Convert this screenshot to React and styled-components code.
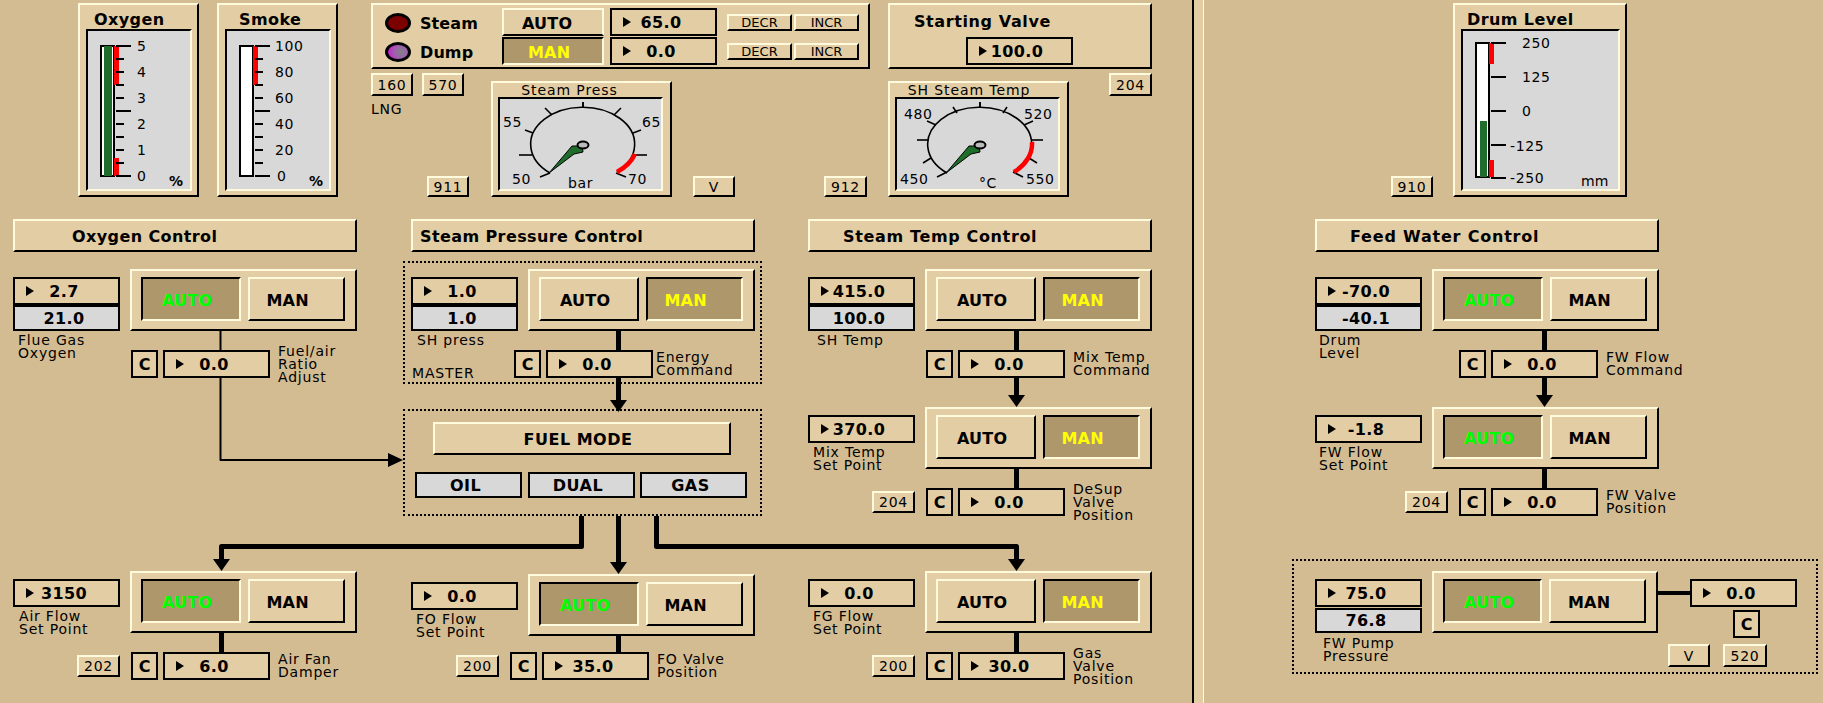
import React from "react";
import styled, { createGlobalStyle, css } from "styled-components";

const BG = "#d3bc92";
const PANEL = "#e3cda4";
const PRESSED = "#ae986b";
const CREAM = "#fffbdc";
const GREY = "#d8d8d8";
const GREEN = "#1f6d2b";

const raised = css`
    border-style: solid;
    border-width: 2px;
    border-color: ${CREAM} #000 #000 ${CREAM};
`;

const sunken = css`
    border-style: solid;
    border-width: 2px;
    border-color: #000 ${CREAM} ${CREAM} #000;
`;

const GlobalStyle = createGlobalStyle`
    * { box-sizing: border-box; }
    body {
        margin: 0;
        background: ${BG};
        font-family: "DejaVu Sans", Verdana, sans-serif;
        color: #000;
    }
`;

const Page = styled.div`
    position: relative;
    display: flex;
    width: 1823px;
    height: 703px;
    overflow: hidden;
    background: ${BG};
`;

const LeftPanel = styled.div`
    width: 1192px;
    flex: none;
`;

const Divider = styled.div`
    width: 12px;
    flex: none;
    background: ${PANEL};
    border-left: 2px solid #000;
    border-right: 1px solid ${CREAM};
`;

const RightPanel = styled.div`
    flex: 1;
`;

const TopRow = styled.div`
    display: flex;
    height: 194px;
    margin-top: 3px;
    padding-left: ${p => p.$left}px;
`;

const ControlsRow = styled.div`
    display: flex;
    margin-top: 22px;
    padding-left: ${p => p.$left}px;
`;

/* meters */
const MeterPanel = styled.div`
    ${raised}
    width: ${p => p.$width}px;
    flex: none;
    margin-left: ${p => p.$ml || 0}px;
    background: ${PANEL};
    display: flex;
    flex-direction: column;
`;

const MeterTitle = styled.div`
    height: 24px;
    padding-left: ${p => p.$indent}px;
    font-size: 16px;
    font-weight: 700;
    letter-spacing: 0.4px;
    line-height: 29px;
`;

const MeterScreen = styled.div`
    ${sunken}
    height: 162px;
    margin: 0 5px 0 6px;
    background: ${GREY};
`;

const Svg = styled.svg`
    display: block;
    overflow: visible;
`;

const ScaleText = styled.text`
    font-family: "DejaVu Sans", Verdana, sans-serif;
    font-size: 14px;
    letter-spacing: 0.6px;
`;

const UnitText = styled.text`
    font-family: "DejaVu Sans", Verdana, sans-serif;
    font-size: 14px;
    font-weight: ${p => p.$weight || 400};
`;

function BarMeter({ title, indent, width, ml, barY, barH, fill, reds, ticks, labels, unit, unitX }) {
    return (
        <MeterPanel $width={width} $ml={ml}>
            <MeterTitle $indent={indent}>{title}</MeterTitle>
            <MeterScreen>
                <Svg width={width - 20} height={158}>
                    <rect x="13" y={barY + 1} width="13" height={barH - 2} fill="#fff" stroke="#000" strokeWidth="2" />
                    {fill && <rect x={fill.x} y={fill.y} width={fill.w} height={fill.h} fill={GREEN} />}
                    {reds.map(r => <rect key={r[0]} x="26" y={r[0]} width="5" height={r[1]} fill="#f00" />)}
                    {ticks.map(t => <rect key={t[0]} x="28" y={t[0] - 1} width={t[1] ? 15 : 8} height="2" fill="#000" />)}
                    {labels.map(l => <ScaleText key={l[0]} x={l[1]} y={l[2]}>{l[0]}</ScaleText>)}
                    <UnitText x={unitX} y="155" $weight={unit === "%" ? 700 : 400}>{unit}</UnitText>
                </Svg>
            </MeterScreen>
        </MeterPanel>
    );
}

const percentTicks = [15, 28, 41, 54, 67, 80, 93, 106, 119, 132, 145].map(y => [y, y === 15 || y === 80 || y === 145]);

/* round gauges */
const GaugePanel = styled.div`
    ${raised}
    width: 181px;
    height: 116px;
    flex: none;
    align-self: flex-end;
    margin-left: ${p => p.$ml || 0}px;
    background: ${PANEL};
`;

const GaugeTitle = styled.div`
    height: 14px;
    font-size: 14px;
    line-height: 14px;
    letter-spacing: 0.9px;
    text-align: center;
    padding-right: ${p => p.$shift}px;
`;

const GaugeScreen = styled.div`
    ${sunken}
    height: 94px;
    width: 165px;
    margin-left: 5px;
    background: ${GREY};
`;

function Gauge({ title, shift, ml, ticks, labels, unit, unitX, redFrom }) {
    return (
        <GaugePanel $ml={ml}>
            <GaugeTitle $shift={shift}>{title}</GaugeTitle>
            <GaugeScreen>
                <Svg width="161" height="90">
                    <path d="M50 74 A52 37 0 1 1 117 73" fill="none" stroke="#000" strokeWidth="1.6" />
                    {ticks.map(t => (
                        <g key={t.join()} stroke="#000" strokeWidth="1.6">
                            <line x1={t[0]} y1={t[1]} x2={t[2]} y2={t[3]} />
                            <line x1={166 - t[0]} y1={t[1]} x2={166 - t[2]} y2={t[3]} />
                        </g>
                    ))}
                    <path d={`M135 ${redFrom} A52 37 0 0 1 117 73`} fill="none" stroke="#f00" strokeWidth="4.5" />
                    <polygon points="49,74 72,47 82,47 83,53 74,55" fill={GREEN} stroke="#000" strokeWidth="1" />
                    <ellipse cx="83" cy="46" rx="5.5" ry="3.5" fill="#bbb" stroke="#000" strokeWidth="2" />
                    {labels.map(l => <ScaleText key={l[0]} x={l[1]} y={l[2]}>{l[0]}</ScaleText>)}
                    <ScaleText x={unitX} y="89">{unit}</ScaleText>
                </Svg>
            </GaugeScreen>
        </GaugePanel>
    );
}

/* fields and buttons */
const Field = styled.div`
    position: relative;
    width: 107px;
    height: ${p => p.$h || 28}px;
    flex: none;
    display: flex;
    align-items: center;
    justify-content: center;
    padding-right: 5px;
    border: 2px solid #000;
    background: ${p => (p.$grey ? GREY : PANEL)};
    font-size: 16px;
    font-weight: 700;
    letter-spacing: 0.4px;
`;

const Pointer = styled.span`
    position: absolute;
    left: 11px;
    top: 50%;
    margin-top: -5px;
    border-style: solid;
    border-width: 5px 0 5px 8px;
    border-color: transparent transparent transparent #000;
`;

function Value({ value, grey, h }) {
    return (
        <Field $grey={grey} $h={h}>
            {!grey && <Pointer />}
            {value}
        </Field>
    );
}

const Tag = styled.div`
    ${raised}
    width: ${p => p.$w || 43}px;
    height: ${p => p.$h || 22}px;
    flex: none;
    display: flex;
    align-items: center;
    justify-content: center;
    background: ${PANEL};
    font-size: 14px;
    letter-spacing: 0.8px;
    margin-left: ${p => p.$ml || 0}px;
    margin-right: ${p => p.$mr || 0}px;
    align-self: ${p => p.$self || "auto"};
`;

const FootTag = styled(Tag)`
    margin-top: auto;
`;

const ClearBox = styled.div`
    width: 27px;
    height: 28px;
    flex: none;
    display: flex;
    align-items: center;
    justify-content: center;
    border: 2px solid #000;
    background: ${PANEL};
    font-size: 16px;
    font-weight: 700;
`;

const ModeButton = styled.div`
    ${p => (p.$on ? sunken : raised)}
    flex: 1;
    display: flex;
    align-items: center;
    padding: 2px 0 0 ${p => p.$pad}px;
    background: ${p => (p.$on ? PRESSED : PANEL)};
    color: ${p => (p.$on ? p.$lit : "#000")};
    font-size: 16px;
    font-weight: 700;
    letter-spacing: 0.2px;
`;

const Switch = styled.div`
    ${raised}
    width: ${p => p.$w || 227}px;
    height: 62px;
    flex: none;
    display: flex;
    gap: 7px;
    padding: 6px 10px 8px 9px;
    background: ${PANEL};
    margin-top: ${p => p.$mt || 0}px;
`;

function ModeSwitch({ mode, w, mt }) {
    return (
        <Switch $w={w} $mt={mt}>
            <ModeButton $on={mode === "auto"} $lit="#0f0" $pad={19}>AUTO</ModeButton>
            <ModeButton $on={mode === "man"} $lit="#ff0" $pad={17}>MAN</ModeButton>
        </Switch>
    );
}

/* steam / dump panel */
const SteamGroup = styled.div`
    width: 499px;
    flex: none;
    margin-left: 33px;
    display: flex;
    flex-direction: column;
`;

const SteamPanel = styled.div`
    ${raised}
    height: 66px;
    flex: none;
    display: flex;
    flex-direction: column;
    gap: 1px;
    padding: 3px 0 0 12px;
    background: ${PANEL};
`;

const SteamRow = styled.div`
    display: flex;
    align-items: center;
    height: 28px;
`;

const Lamp = styled.div`
    width: 26px;
    height: 20px;
    flex: none;
    margin-top: 2px;
    border-radius: 50%;
    border: 3px solid #000;
    background: ${p => p.$fill};
`;

const LampName = styled.div`
    width: 91px;
    flex: none;
    padding: 3px 0 0 9px;
    font-size: 16px;
    font-weight: 700;
    letter-spacing: 0.1px;
`;

const SteamMode = styled.div`
    ${p => (p.$on ? sunken : raised)}
    width: 102px;
    height: 28px;
    flex: none;
    margin-right: 6px;
    display: flex;
    align-items: center;
    padding: 2px 0 0 ${p => (p.$on ? 24 : 18)}px;
    background: ${p => (p.$on ? PRESSED : PANEL)};
    color: ${p => (p.$on ? "#ff0" : "#000")};
    font-size: 16px;
    font-weight: 700;
    letter-spacing: 0.2px;
    border-right-color: ${CREAM};
`;

const StepButton = styled.div`
    ${raised}
    width: 65px;
    height: 17px;
    flex: none;
    margin-left: ${p => p.$ml}px;
    display: flex;
    align-items: center;
    justify-content: center;
    font-size: 13px;
    background: ${PANEL};
`;

function SteamLine({ lamp, name, modeOn, mode, value }) {
    return (
        <SteamRow>
            <Lamp $fill={lamp} />
            <LampName>{name}</LampName>
            <SteamMode $on={modeOn}>{mode}</SteamMode>
            <Value value={value} />
            <StepButton $ml={10}>DECR</StepButton>
            <StepButton $ml={2}>INCR</StepButton>
        </SteamRow>
    );
}

const UnderRow = styled.div`
    flex: 1;
    display: flex;
    margin-top: 4px;
`;

const TagStack = styled.div`
    width: 98px;
    flex: none;
    display: flex;
    flex-direction: column;
`;

const TagRow = styled.div`
    display: flex;
    gap: 9px;
`;

const SmallCaption = styled.div`
    font-size: 14px;
    letter-spacing: 0.8px;
    line-height: 14px;
    margin-top: 6px;
`;

/* starting valve */
const StartGroup = styled.div`
    width: 264px;
    flex: none;
    margin-left: 18px;
    display: flex;
    flex-direction: column;
`;

const StartPanel = styled.div`
    ${raised}
    height: 66px;
    flex: none;
    padding: 5px 0 0 24px;
    background: ${PANEL};
`;

const StartTitle = styled.div`
    font-size: 16px;
    font-weight: 700;
    letter-spacing: 0.6px;
    line-height: 23px;
    margin-bottom: 4px;
`;

const StartField = styled.div`
    margin-left: 52px;
`;

/* control columns */
const Column = styled.div`
    display: grid;
    width: 344px;
    flex: none;
    margin-left: ${p => p.$ml || 0}px;
    grid-template-rows: 33px 17px 109px 29px 109px 55px 109px;
`;

const TitleBar = styled.div`
    ${raised}
    grid-row: 1;
    background: ${PANEL};
    padding-left: ${p => p.$indent}px;
    font-size: 16px;
    font-weight: 700;
    letter-spacing: ${p => p.$ls || 0.4}px;
    line-height: 32px;
`;

const Slot = styled.div`
    grid-row: ${p => p.$row};
    padding-top: ${p => p.$drop || 0}px;
    min-width: 0;
`;

const UnitTop = styled.div`
    display: flex;
    gap: 10px;
    height: 62px;
`;

const LeftCell = styled.div`
    width: 107px;
    flex: none;
    padding-top: 8px;
`;

const Caption = styled.div`
    font-size: 14px;
    letter-spacing: 0.8px;
    line-height: 13px;
    margin: 3px 0 0 ${p => p.$indent || 5}px;
    white-space: pre;
`;

const OutRow = styled.div`
    display: flex;
    align-items: center;
    height: 28px;
    margin-top: ${p => 19 - (p.$drop || 0)}px;
    padding-left: ${p => p.$at}px;
`;

const OutField = styled.div`
    margin-left: 5px;
`;

const OutCaption = styled.div`
    flex: none;
    margin-left: ${p => p.$gap || 8}px;
    font-size: 14px;
    letter-spacing: 0.8px;
    line-height: 13px;
    white-space: pre;
`;

function ControlUnit({ setValue, pv, caption, indent, mode, at = 118, out, outCaption, outGap, tag, drop }) {
    return (
        <>
            <UnitTop>
                <LeftCell>
                    <Value value={setValue} />
                    {pv && <Value value={pv} grey h={26} />}
                    <Caption $indent={indent}>{caption}</Caption>
                </LeftCell>
                <ModeSwitch mode={mode} />
            </UnitTop>
            <OutRow $at={tag ? at - 54 : at} $drop={drop}>
                {tag && <Tag $mr={11}>{tag}</Tag>}
                <ClearBox>C</ClearBox>
                <OutField><Value value={out} /></OutField>
                <OutCaption $gap={outGap}>{outCaption}</OutCaption>
            </OutRow>
        </>
    );
}

/* dotted groups */
const MasterBox = styled.div`
    position: relative;
    margin: -8px -7px 0 -8px;
    height: 123px;
    padding: 6px 5px 0 6px;
    border: 2px dotted #000;
`;

const MasterLabel = styled.div`
    position: absolute;
    left: 7px;
    bottom: 2px;
    font-size: 14px;
    letter-spacing: 0.8px;
    line-height: 14px;
`;

const FuelBox = styled.div`
    margin: 2px -7px 0 -8px;
    height: 107px;
    padding: 11px 13px 0 10px;
    border: 2px dotted #000;
`;

const FuelButton = styled.div`
    ${raised}
    height: 33px;
    margin: 0 16px 0 18px;
    padding: 2px 8px 0 0;
    display: flex;
    align-items: center;
    justify-content: center;
    background: ${PANEL};
    font-size: 16px;
    font-weight: 700;
    letter-spacing: 0.5px;
`;

const FuelRow = styled.div`
    display: flex;
    justify-content: space-between;
    margin-top: 17px;
`;

const FuelChoice = styled.div`
    width: 107px;
    height: 26px;
    padding: 1px 6px 0 0;
    display: flex;
    align-items: center;
    justify-content: center;
    border: 2px solid #000;
    background: ${GREY};
    font-size: 16px;
    font-weight: 700;
    letter-spacing: 0.5px;
`;

const PumpBox = styled.div`
    display: flex;
    width: 526px;
    height: 115px;
    margin: -12px 0 0 -23px;
    padding-left: 21px;
    border: 2px dotted #000;
`;

const PumpLeft = styled.div`
    width: 107px;
    flex: none;
    margin-right: 10px;
    padding-top: 18px;
    display: flex;
    flex-direction: column;
    gap: 1px;
`;

const PumpRight = styled.div`
    width: 107px;
    flex: none;
    margin-left: 32px;
    padding-top: 18px;
    display: flex;
    flex-direction: column;
`;

const PumpClear = styled.div`
    margin: 3px 0 0 43px;
`;

const PumpTags = styled.div`
    display: flex;
    gap: 13px;
    margin: 6px 0 0 -22px;
`;

/* wires drawn over the panels */
const WireLayer = styled.svg`
    position: absolute;
    left: 0;
    top: 0;
    pointer-events: none;
`;

function Wire({ d, w = 5 }) {
    return <path d={d} fill="none" stroke="#000" strokeWidth={w} strokeLinejoin="round" />;
}

function ArrowDown({ x, y }) {
    return <polygon points={`${x - 8.5},${y - 12} ${x + 8.5},${y - 12} ${x},${y}`} fill="#000" />;
}

function Wires() {
    return (
        <WireLayer width="1823" height="703">
            <Wire w={2} d="M220.5 331 V350 M220.5 378 V460 H390" />
            <polygon points="388,453 388,467 403,460" fill="#000" />
            <Wire d="M618.5 331 V350 M618.5 378 V402" />
            <ArrowDown x={618.5} y={412} />
            <Wire d="M581.5 516 V546.5 H221.5 V562" />
            <ArrowDown x={221.5} y={571} />
            <Wire d="M618.5 516 V565" />
            <ArrowDown x={618.5} y={574} />
            <Wire d="M656.5 516 V546.5 H1016.5 V562" />
            <ArrowDown x={1016.5} y={571} />
            <Wire d="M221.5 632 V653 M618.5 635 V653 M1016.5 632 V653" />
            <Wire d="M1016.5 331 V350 M1016.5 378 V398 M1016.5 469 V488" />
            <ArrowDown x={1016.5} y={407} />
            <Wire d="M1544.5 331 V350 M1544.5 378 V398 M1544.5 469 V488" />
            <ArrowDown x={1544.5} y={407} />
            <Wire w={4} d="M1658 593 H1690" />
        </WireLayer>
    );
}

const steamTicks = [[19, 56, 32, 56], [25, 31, 33, 34], [45, 9, 52, 16], [83, 3, 83, 9], [40, 78, 50, 74]];
const shTicks = [[20, 41, 31, 41], [26, 64, 34, 59], [30, 22, 39, 26], [56, 8, 60, 14], [83, 3, 83, 9], [40, 78, 50, 73]];

function App() {
    return (
        <Page>
            <GlobalStyle />
            <LeftPanel>
                <TopRow $left={78}>
                    <BarMeter
                        title="Oxygen" indent={14} width={121}
                        barY={14} barH={132}
                        fill={{ x: 16, y: 15, w: 8, h: 130 }}
                        reds={[[15, 39], [127, 18]]}
                        ticks={percentTicks}
                        labels={[["5", 49, 20], ["4", 49, 46], ["3", 49, 72], ["2", 49, 98], ["1", 49, 124], ["0", 49, 150]]}
                        unit="%" unitX={81}
                    />
                    <BarMeter
                        title="Smoke" indent={20} width={121} ml={18}
                        barY={14} barH={132}
                        reds={[[15, 39]]}
                        ticks={percentTicks}
                        labels={[["100", 48, 20], ["80", 48, 46], ["60", 48, 72], ["40", 48, 98], ["20", 48, 124], ["0", 50, 150]]}
                        unit="%" unitX={82}
                    />
                    <SteamGroup>
                        <SteamPanel>
                            <SteamLine lamp="#7d0000" name="Steam" mode="AUTO" value="65.0" />
                            <SteamLine
                                lamp="radial-gradient(circle at 65% 50%, #808080 0, #a060b0 45%, #c820c8 90%)"
                                name="Dump" mode="MAN" modeOn value="0.0"
                            />
                        </SteamPanel>
                        <UnderRow>
                            <TagStack>
                                <TagRow>
                                    <Tag $w={42} $h={23}>160</Tag>
                                    <Tag $w={42} $h={23}>570</Tag>
                                </TagRow>
                                <SmallCaption>LNG</SmallCaption>
                                <FootTag $w={42} $h={21} $ml={56} $self="flex-start">911</FootTag>
                            </TagStack>
                            <Gauge
                                title="Steam Press" shift={24} ml={22}
                                ticks={steamTicks}
                                labels={[["55", 3, 28], ["65", 142, 28], ["50", 12, 85], ["70", 128, 85]]}
                                unit="bar" unitX={68} redFrom={55}
                            />
                            <Tag $w={42} $h={21} $ml={21} $self="flex-end">V</Tag>
                            <Tag $w={43} $h={21} $ml={89} $self="flex-end">912</Tag>
                        </UnderRow>
                    </SteamGroup>
                    <StartGroup>
                        <StartPanel>
                            <StartTitle>Starting Valve</StartTitle>
                            <StartField><Value value="100.0" /></StartField>
                        </StartPanel>
                        <UnderRow>
                            <Gauge
                                title="SH Steam Temp" shift={19}
                                ticks={shTicks}
                                labels={[["480", 7, 20], ["520", 127, 20], ["450", 3, 85], ["550", 129, 85]]}
                                unit="°C" unitX={82} redFrom={43}
                            />
                            <Tag $h={23} $ml={40}>204</Tag>
                        </UnderRow>
                    </StartGroup>
                </TopRow>
                <ControlsRow $left={13}>
                    <Column>
                        <TitleBar $indent={57}>Oxygen Control</TitleBar>
                        <Slot $row={3}>
                            <ControlUnit
                                setValue="2.7" pv="21.0" caption={"Flue Gas\nOxygen"} mode="auto"
                                out="0.0" outCaption={"Fuel/air\nRatio\nAdjust"}
                            />
                        </Slot>
                        <Slot $row={7}>
                            <ControlUnit
                                setValue="3150" caption={"Air Flow\nSet Point"} indent={6} mode="auto"
                                out="6.0" outCaption={"Air Fan\nDamper"} tag="202"
                            />
                        </Slot>
                    </Column>
                    <Column $ml={54}>
                        <TitleBar $indent={7}>Steam Pressure Control</TitleBar>
                        <Slot $row={3}>
                            <MasterBox>
                                <ControlUnit
                                    setValue="1.0" pv="1.0" caption="SH press" indent={6} mode="man"
                                    at={103} out="0.0" outCaption={"Energy\nCommand"} outGap={3}
                                />
                                <MasterLabel>MASTER</MasterLabel>
                            </MasterBox>
                        </Slot>
                        <Slot $row={5}>
                            <FuelBox>
                                <FuelButton>FUEL MODE</FuelButton>
                                <FuelRow>
                                    <FuelChoice>OIL</FuelChoice>
                                    <FuelChoice>DUAL</FuelChoice>
                                    <FuelChoice>GAS</FuelChoice>
                                </FuelRow>
                            </FuelBox>
                        </Slot>
                        <Slot $row={7} $drop={3}>
                            <ControlUnit
                                setValue="0.0" caption={"FO Flow\nSet Point"} mode="auto"
                                at={99} out="35.0" outCaption={"FO Valve\nPosition"} tag="200" drop={3}
                            />
                        </Slot>
                    </Column>
                    <Column $ml={53}>
                        <TitleBar $indent={33} $ls={0.65}>Steam Temp Control</TitleBar>
                        <Slot $row={3}>
                            <ControlUnit
                                setValue="415.0" pv="100.0" caption="SH Temp" indent={9} mode="man"
                                out="0.0" outCaption={"Mix Temp\nCommand"}
                            />
                        </Slot>
                        <Slot $row={5}>
                            <ControlUnit
                                setValue="370.0" caption={"Mix Temp\nSet Point"} mode="man"
                                out="0.0" outCaption={"DeSup\nValve\nPosition"} tag="204"
                            />
                        </Slot>
                        <Slot $row={7}>
                            <ControlUnit
                                setValue="0.0" caption={"FG Flow\nSet Point"} mode="man"
                                out="30.0" outCaption={"Gas\nValve\nPosition"} tag="200"
                            />
                        </Slot>
                    </Column>
                </ControlsRow>
            </LeftPanel>
            <Divider />
            <RightPanel>
                <TopRow $left={187}>
                    <Tag $w={42} $h={21} $self="flex-end">910</Tag>
                    <BarMeter
                        title="Drum Level" indent={12} width={174} ml={20}
                        barY={11} barH={136}
                        fill={{ x: 17, y: 90, w: 7, h: 56 }}
                        reds={[[12, 21], [129, 17]]}
                        ticks={[[12, 1], [46, 1], [80, 1], [114, 1], [147, 1]]}
                        labels={[["250", 59, 17], ["125", 59, 51], ["0", 59, 85], ["-125", 47, 120], ["-250", 47, 152]]}
                        unit="mm" unitX={118}
                    />
                </TopRow>
                <ControlsRow $left={111}>
                    <Column>
                        <TitleBar $indent={33} $ls={0.8}>Feed Water Control</TitleBar>
                        <Slot $row={3}>
                            <ControlUnit
                                setValue="-70.0" pv="-40.1" caption={"Drum\nLevel"} indent={4} mode="auto"
                                at={144} out="0.0" outCaption={"FW Flow\nCommand"}
                            />
                        </Slot>
                        <Slot $row={5}>
                            <ControlUnit
                                setValue="-1.8" caption={"FW Flow\nSet Point"} indent={4} mode="auto"
                                at={144} out="0.0" outCaption={"FW Valve\nPosition"} tag="204"
                            />
                        </Slot>
                        <Slot $row={7}>
                            <PumpBox>
                                <PumpLeft>
                                    <Value value="75.0" />
                                    <Value value="76.8" grey h={25} />
                                    <Caption $indent={8}>{"FW Pump\nPressure"}</Caption>
                                </PumpLeft>
                                <ModeSwitch mode="auto" w={226} mt={10} />
                                <PumpRight>
                                    <Value value="0.0" />
                                    <PumpClear><ClearBox>C</ClearBox></PumpClear>
                                    <PumpTags>
                                        <Tag $w={42} $h={23}>V</Tag>
                                        <Tag $w={44} $h={23}>520</Tag>
                                    </PumpTags>
                                </PumpRight>
                            </PumpBox>
                        </Slot>
                    </Column>
                </ControlsRow>
            </RightPanel>
            <Wires />
        </Page>
    );
}

export default App;
